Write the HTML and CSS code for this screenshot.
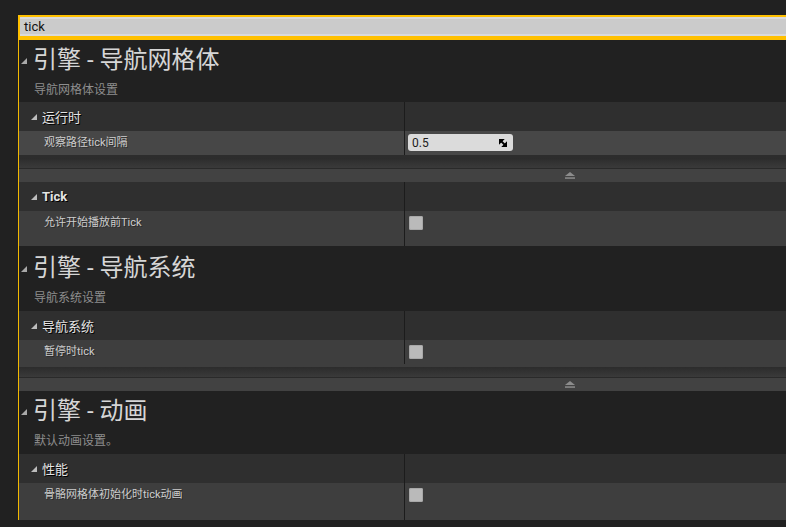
FILE: index.html
```html
<!DOCTYPE html>
<html lang="zh-CN">
<head>
<meta charset="utf-8">
<title>项目设置</title>
<link rel="stylesheet" href="styles.css">
</head>
<body>
<div class="search"><div class="search-input">tick</div></div>
<div class="panel">

  <section class="sec">
    <div class="sec-head first">
      <div class="sec-title"><svg class="tri-big" viewBox="0 0 6 6"><polygon points="6,0 6,6 0,6"/></svg><span>引擎 - 导航网格体</span></div>
      <div class="sec-sub">导航网格体设置</div>
    </div>
    <div class="cat">
      <div class="cat-name"><svg class="tri" viewBox="0 0 6 6"><polygon points="6,0 6,6 0,6"/></svg><span>运行时</span></div>
      <div class="val"></div>
    </div>
    <div class="row hi">
      <div class="prop">观察路径tick间隔</div>
      <div class="val">
        <div class="num"><span>0.5</span><svg class="drag" viewBox="0 0 8 8"><polygon points="0,0 4.5,0 0,4.5"/><polygon points="8,8 3.5,8 8,3.5"/><line x1="1" y1="1" x2="7" y2="7"/></svg></div>
      </div>
    </div>
    <div class="adv dark">
      <div class="adv-gap"></div><div class="adv-shadow"></div><div class="adv-line"></div>
      <div class="adv-bar"><svg class="eject" viewBox="0 0 10 7"><polygon points="5,0 10,4 0,4"/><rect x="0" y="5.3" width="10" height="1.5"/></svg></div>
    </div>
    <div class="cat">
      <div class="cat-name"><svg class="tri" viewBox="0 0 6 6"><polygon points="6,0 6,6 0,6"/></svg><span class="bold">Tick</span></div>
      <div class="val"></div>
    </div>
    <div class="row last">
      <div class="prop">允许开始播放前Tick</div>
      <div class="val"><div class="check"></div></div>
    </div>
  </section>

  <section class="sec">
    <div class="sec-head">
      <div class="sec-title"><svg class="tri-big" viewBox="0 0 6 6"><polygon points="6,0 6,6 0,6"/></svg><span>引擎 - 导航系统</span></div>
      <div class="sec-sub">导航系统设置</div>
    </div>
    <div class="cat">
      <div class="cat-name"><svg class="tri" viewBox="0 0 6 6"><polygon points="6,0 6,6 0,6"/></svg><span>导航系统</span></div>
      <div class="val"></div>
    </div>
    <div class="row">
      <div class="prop">暂停时tick</div>
      <div class="val"><div class="check"></div></div>
    </div>
    <div class="adv">
      <div class="adv-gap"></div><div class="adv-shadow"></div><div class="adv-line"></div>
      <div class="adv-bar"><svg class="eject" viewBox="0 0 10 7"><polygon points="5,0 10,4 0,4"/><rect x="0" y="5.3" width="10" height="1.5"/></svg></div>
    </div>
  </section>

  <section class="sec">
    <div class="sec-head">
      <div class="sec-title"><svg class="tri-big" viewBox="0 0 6 6"><polygon points="6,0 6,6 0,6"/></svg><span>引擎 - 动画</span></div>
      <div class="sec-sub">默认动画设置。</div>
    </div>
    <div class="cat">
      <div class="cat-name"><svg class="tri" viewBox="0 0 6 6"><polygon points="6,0 6,6 0,6"/></svg><span>性能</span></div>
      <div class="val"></div>
    </div>
    <div class="row last tall">
      <div class="prop">骨骼网格体初始化时tick动画</div>
      <div class="val"><div class="check"></div></div>
    </div>
  </section>

</div>
</body>
</html>
```

FILE: styles.css
```css
html, body {
  margin: 0;
  padding: 0;
}
body {
  background: #212121;
  width: 786px;
  height: 527px;
  overflow: hidden;
  font-family: Roboto, "Noto Sans CJK SC", "Noto Sans", sans-serif;
  color: #d0d0d0;
}

.search {
  margin: 15px 0 0 18px;
  width: 1103px;
  box-sizing: border-box;
  border: 2px solid #ffc000;
  border-bottom-width: 4px;
  border-right: none;
  height: 25px;
}
.search-input {
  height: 19px;
  box-sizing: border-box;
  background: #cbcbcb;
  border-top: 2px solid #dadada;
  border-bottom: 2px solid #dadada;
  padding-left: 4px;
  font-size: 13px;
  line-height: 15px;
  color: #111;
}

.panel {
  margin-left: 18px;
  width: 1103px;
  box-sizing: border-box;
  border-left: 1px solid #f2b800;
}

.sec-head {
  height: 63px;
  box-sizing: border-box;
  padding-top: 6px;
}
.sec-head.first {
  height: 62px;
}
.sec-title {
  display: flex;
  align-items: center;
  padding-left: 2px;
  height: 28px;
  font-size: 24px;
  line-height: 28px;
  color: #d6d6d6;
}
.tri-big {
  width: 6px;
  height: 6px;
  fill: #a9a9a9;
  margin-right: 6px;
  margin-top: 2px;
}
.sec-sub {
  margin-top: 8px;
  padding-left: 15px;
  font-size: 12px;
  line-height: 16px;
  color: #8e8e8e;
}

.cat, .row {
  display: grid;
  grid-template-columns: 385px 1fr;
}
.cat {
  height: 29px;
  background: #2f2f2f;
}
.cat-name {
  display: flex;
  align-items: center;
  padding-left: 12px;
  font-size: 13px;
  color: #e4e4e4;
  text-shadow: 1px 1px 0 #000;
}
.cat-name .bold {
  font-weight: bold;
}
.tri {
  width: 6px;
  height: 6px;
  fill: #bdbdbd;
  margin-right: 5px;
  margin-top: 1px;
}
.val {
  border-left: 1px solid #1c1c1c;
  display: flex;
  align-items: flex-start;
}

.row {
  background: #3e3e3e;
}
.row.hi {
  background: #474747;
}
.row .prop, .row .val {
  height: 24px;
  box-sizing: content-box;
}
.row.last {
  margin-bottom: 2px;
}
.row.last .prop, .row.last .val {
  padding-bottom: 11px;
}
.row.last.tall .prop, .row.last.tall .val {
  padding-bottom: 13px;
}
.prop {
  display: flex;
  align-items: center;
  padding-left: 25px;
  font-size: 11px;
  line-height: 14px;
  color: #cdcdcd;
  text-shadow: 1px 1px 0 rgba(0, 0, 0, 0.35);
}

.num {
  margin: 3px 0 0 3px;
  width: 105px;
  height: 17px;
  box-sizing: border-box;
  background: #dbdbdb;
  border-radius: 3px;
  display: flex;
  align-items: center;
  justify-content: space-between;
  padding: 0 6px 0 4px;
  font-size: 12px;
  color: #1c1c1c;
}
.drag {
  width: 8px;
  height: 8px;
  fill: #000;
  stroke: #000;
  stroke-width: 1.8;
}

.check {
  margin: 5px 0 0 4px;
  width: 14px;
  height: 14px;
  background: #bababa;
  border-radius: 2px;
  box-shadow: inset 0 0 0 1px #a8a8a8;
}

.adv-gap {
  height: 3px;
  background: #3e3e3e;
}
.adv.dark .adv-gap {
  background: #2d2d2d;
}
.adv-shadow {
  height: 10px;
  background: linear-gradient(#2c2c2c, #3a3a3a);
}
.adv-line {
  height: 1px;
  background: #2a2a2a;
}
.adv-bar {
  height: 13px;
  background: #424242;
  display: flex;
  justify-content: center;
  align-items: center;
}
.eject {
  width: 10px;
  height: 7px;
  fill: #8c8c8c;
}
```
